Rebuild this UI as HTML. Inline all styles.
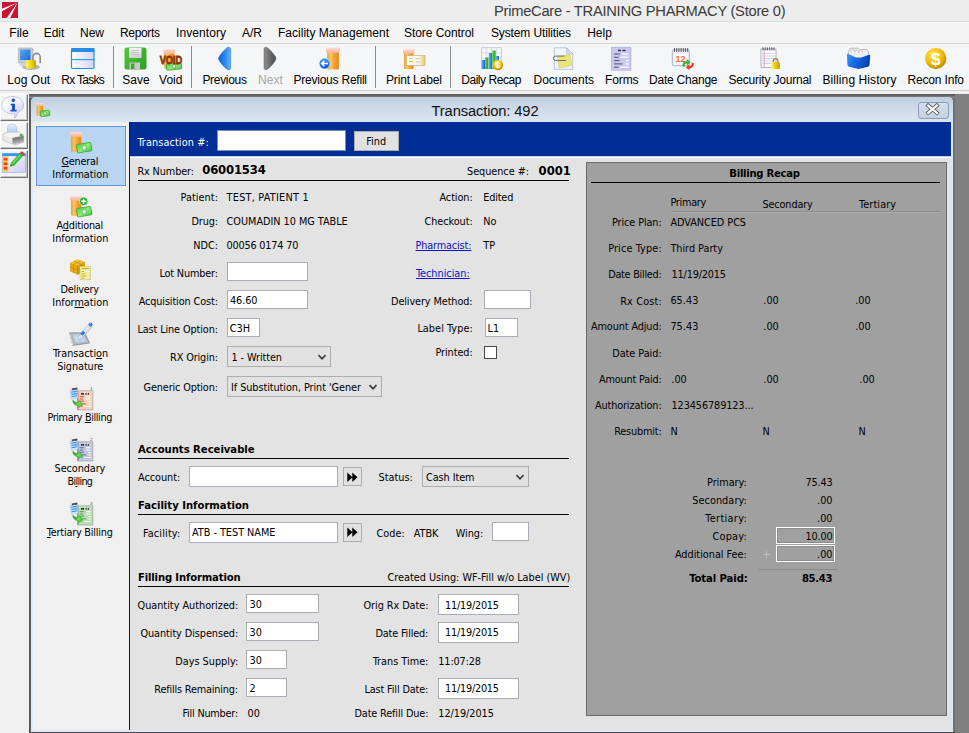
<!DOCTYPE html>
<html lang="en"><head><meta charset="utf-8"><title>PrimeCare - TRAINING PHARMACY (Store 0)</title>
<style>
html,body{margin:0;padding:0}
body{width:969px;height:733px;overflow:hidden;background:#f0f0f0;position:relative;font-family:"Liberation Sans",sans-serif;color:#000}
div,span,svg.ic{position:absolute;box-sizing:border-box}
.t{white-space:nowrap;line-height:14px;font-size:10.8px;font-family:"DejaVu Sans Condensed","Liberation Sans",sans-serif}
.b{font-size:11.2px}
.menu{font-family:"Liberation Sans",sans-serif;font-size:12px;line-height:16px;color:#000}
.title{font-family:"Liberation Sans",sans-serif;font-size:14.7px;line-height:18px;color:#3a3a3a}
.tb{font-family:"Liberation Sans",sans-serif;font-size:12px;line-height:16px;color:#000}
.dis{color:#a6a6a6}
.b{font-weight:bold}
.big{font-family:"DejaVu Sans","Liberation Sans",sans-serif;font-size:11.6px;font-weight:bold;line-height:16px}
.w{color:#fff}
.lnk{color:#0a14c8;text-decoration:underline}
.wt{font-family:"Liberation Sans",sans-serif;font-size:14.7px;line-height:18px;color:#111}
.inp{background:#fff;border:1px solid #a9adb6}
.sel{background:#e2e2e2;border:1px solid #adadad}
.btn{background:#e1e1e1;border:1px solid #adadad}
.hr{background:#000;height:1px}
.sep{background:#8c8c8c;width:1px}
.sbtn{background:#f4f4f4;border-right:1px solid #787878;border-bottom:1px solid #707070;border-top:1px solid #fff;border-left:1px solid #fff;box-shadow:inset -1px -1px 0 #c4c4c4}
u{text-decoration:underline}
</style></head>
<body>
<div class="" style="left:0.0px;top:0.0px;width:969.0px;height:21.0px;background:#ededed"></div>
<div class="" style="left:0.0px;top:21.0px;width:969.0px;height:1.0px;background:#dcdcdc"></div>
<div class="" style="left:0.0px;top:22.0px;width:969.0px;height:21.0px;background:#f4f4f4"></div>
<div class="" style="left:0.0px;top:43.0px;width:969.0px;height:1.0px;background:#d4d4d4"></div>
<div class="" style="left:0.0px;top:44.0px;width:969.0px;height:46.0px;background:#f5f6f7"></div>
<div class="" style="left:0.0px;top:90.0px;width:969.0px;height:1.0px;background:#cdcdcd"></div>
<div class="" style="left:0.0px;top:91.0px;width:969.0px;height:3.0px;background:#f0f0f0"></div>
<svg class="ic" style="left:2px;top:2px" width="17" height="17" viewBox="2 2 17 17"><rect x="2" y="2" width="16" height="16" fill="#cb1431"/><path d="M17.600 2.600L2 8.800V11.200z" fill="#fff"/><path d="M17.600 2.600L6.700 18H10.200z" fill="#fff"/></svg>
<span id="t1" class="t title" style="top:2.2px;letter-spacing:-0.26px;left:494.0px;">PrimeCare - TRAINING PHARMACY (Store 0)</span>
<span id="t2" class="t menu" style="top:24.6px;left:9.3px;">File</span>
<span id="t3" class="t menu" style="top:24.6px;left:43.7px;">Edit</span>
<span id="t4" class="t menu" style="top:24.6px;left:80.0px;">New</span>
<span id="t5" class="t menu" style="top:24.6px;letter-spacing:-0.34px;left:120.0px;">Reports</span>
<span id="t6" class="t menu" style="top:24.6px;letter-spacing:0.08px;left:176.0px;">Inventory</span>
<span id="t7" class="t menu" style="top:24.6px;left:242.0px;">A/R</span>
<span id="t8" class="t menu" style="top:24.6px;letter-spacing:0.02px;left:278.0px;">Facility Management</span>
<span id="t9" class="t menu" style="top:24.6px;letter-spacing:-0.06px;left:404.0px;">Store Control</span>
<span id="t10" class="t menu" style="top:24.6px;letter-spacing:-0.13px;left:491.0px;">System Utilities</span>
<span id="t11" class="t menu" style="top:24.6px;left:587.2px;">Help</span>
<svg class="ic" style="left:17px;top:46px" width="26" height="26" viewBox="17 46 26 26"><defs><linearGradient id="g1" x1="0" y1="0" x2="1" y2="1"><stop offset="0" stop-color="#5aa8f0"/><stop offset="1" stop-color="#1a6ad8"/></linearGradient><linearGradient id="g2" x1="0" y1="0" x2="1" y2="0"><stop offset="0" stop-color="#fff27a"/><stop offset="0.5" stop-color="#f6d800"/><stop offset="1" stop-color="#c8a000"/></linearGradient></defs><ellipse cx="31" cy="67" rx="9" ry="3" fill="#b8b8b8"/><rect x="18.5" y="48" width="14.5" height="15" rx="1" fill="#c9ced6" stroke="#9aa0a8" stroke-width="0.6"/><rect x="20" y="49.5" width="10.5" height="10.5" fill="url(#g1)"/><path d="M21 63h8l1.5 3h-11z" fill="#d4d4d4"/><path d="M33 60v-3a3.6 3.6 0 0 1 7.2 0v6" fill="none" stroke="#8a8a8a" stroke-width="1.6"/><rect x="26" y="60" width="10" height="8.6" rx="1.6" fill="url(#g2)"/></svg>
<svg class="ic" style="left:69px;top:46px" width="28" height="25" viewBox="69 46 28 25"><defs><linearGradient id="g3" x1="0" y1="0" x2="1" y2="0"><stop offset="0" stop-color="#ffffff"/><stop offset="1" stop-color="#d4d4fa"/></linearGradient></defs><rect x="71.5" y="48.5" width="22.5" height="20" rx="1.5" fill="url(#g3)" stroke="#2b8ce6" stroke-width="1.2"/><rect x="71" y="48" width="23.5" height="4" rx="1" fill="#2b8ce6"/><rect x="71" y="59" width="23.5" height="1.2" fill="#39a0ee"/></svg>
<svg class="ic" style="left:123px;top:46px" width="26" height="26" viewBox="123 46 26 26"><defs><linearGradient id="g4" x1="0" y1="0" x2="1" y2="1"><stop offset="0" stop-color="#55c83c"/><stop offset="1" stop-color="#2f9e22"/></linearGradient><linearGradient id="g5" x1="0" y1="0" x2="0" y2="1"><stop offset="0" stop-color="#f4f4f4"/><stop offset="1" stop-color="#cfcfcf"/></linearGradient></defs><rect x="124.5" y="47.5" width="22" height="22" rx="2.2" fill="url(#g4)"/><rect x="129" y="48" width="12.5" height="10" fill="url(#g5)"/><path d="M131 50.5h8M131 52.5h8M131 54.5h8" stroke="#b8b8b8" stroke-width="0.7"/><rect x="129.5" y="62.5" width="10.5" height="7" fill="#c8c8c8"/><rect x="131" y="63.5" width="3.4" height="5.5" fill="#3aa82c"/></svg>
<svg class="ic" style="left:157px;top:46px" width="28" height="26" viewBox="157 46 28 26"><defs><linearGradient id="g6" x1="0" y1="0" x2="1" y2="0"><stop offset="0" stop-color="#f2a024"/><stop offset="0.3" stop-color="#f8c46a"/><stop offset="0.55" stop-color="#f6a83a"/><stop offset="1" stop-color="#ea840a"/></linearGradient><linearGradient id="g7" x1="0" y1="0" x2="0" y2="1"><stop offset="0" stop-color="#fde2d6"/><stop offset="0.5" stop-color="#f9c6b2"/><stop offset="1" stop-color="#f6b8a0"/></linearGradient></defs><rect x="164.344" y="52.76" width="9.912" height="16.24" rx="1.200" fill="url(#g6)"/><rect x="163.4" y="49" width="11.8" height="4.7" rx="1" fill="url(#g7)"/><linearGradient id="g8" x1="0" y1="0" x2="1" y2="1"><stop offset="0" stop-color="#58cc48"/><stop offset="0.5" stop-color="#8eee78"/><stop offset="1" stop-color="#4cc440"/></linearGradient><g transform="rotate(-6 174 66.3)"><rect x="166.5" y="63.1" width="15" height="6.4" rx="0.8" fill="url(#g8)" stroke="#36ac34" stroke-width="0.8"/><ellipse cx="174" cy="66.3" rx="1.728" ry="1.92" fill="#e2e6e0" stroke="#3fae3a" stroke-width="0.7"/></g><text x="171" y="63.600" text-anchor="middle" font-family="Liberation Sans, sans-serif" font-weight="bold" font-size="11.400" textLength="22.600" lengthAdjust="spacingAndGlyphs" fill="#a23a0a" stroke="#8e3206" stroke-width="0.800">VOID</text></svg>
<svg class="ic" style="left:216px;top:46px" width="17" height="26" viewBox="216 46 17 26"><defs><linearGradient id="g9" x1="0" y1="0" x2="1" y2="0"><stop offset="0" stop-color="#1264d4"/><stop offset="0.55" stop-color="#2c88f2"/><stop offset="1" stop-color="#62b4ff"/></linearGradient></defs><path d="M227.800 47.400c1.700-0.600 2.800 0.200 2.800 1.900v18.400c0 1.700-1.100 2.500-2.800 1.900-1.800-0.700-6.300-5.400-8.600-9.200-0.800-1.300-0.800-2.500 0-3.800 2.300-3.800 6.800-8.500 8.600-9.200z" fill="url(#g9)" stroke="#1a5cc0" stroke-width="0.500"/></svg>
<svg class="ic" style="left:262px;top:46px" width="17" height="26" viewBox="262 46 17 26"><defs><linearGradient id="g10" x1="0" y1="0" x2="1" y2="0"><stop offset="0" stop-color="#909090"/><stop offset="0.5" stop-color="#6c6c6c"/><stop offset="1" stop-color="#4a4a4a"/></linearGradient></defs><path d="M266.800 47.400c-1.700-0.600-2.800 0.200-2.800 1.900v18.400c0 1.700 1.100 2.500 2.800 1.900 1.800-0.700 6.300-5.400 8.600-9.200 0.800-1.300 0.800-2.500 0-3.800-2.300-3.800-6.800-8.500-8.600-9.200z" fill="url(#g10)" stroke="#585858" stroke-width="0.500"/></svg>
<svg class="ic" style="left:318px;top:46px" width="24" height="26" viewBox="318 46 24 26"><defs><linearGradient id="g11" x1="0" y1="0" x2="1" y2="0"><stop offset="0" stop-color="#f2a024"/><stop offset="0.3" stop-color="#f8c46a"/><stop offset="0.55" stop-color="#f6a83a"/><stop offset="1" stop-color="#ea840a"/></linearGradient><linearGradient id="g12" x1="0" y1="0" x2="0" y2="1"><stop offset="0" stop-color="#fde2d6"/><stop offset="0.5" stop-color="#f9c6b2"/><stop offset="1" stop-color="#f6b8a0"/></linearGradient><linearGradient id="g13" x1="0" y1="0" x2="0" y2="1"><stop offset="0" stop-color="#4aa0ff"/><stop offset="1" stop-color="#0a50d0"/></linearGradient></defs><rect x="327.12" y="51.636" width="11.76" height="17.864" rx="1.200" fill="url(#g11)"/><rect x="326" y="47.5" width="14" height="5.17" rx="1" fill="url(#g12)"/><circle cx="324.6" cy="63.5" r="5.4" fill="url(#g13)" stroke="#e8f0ff" stroke-width="0.6"/><path d="M328 63.5h-6M324.4 60.8l-2.8 2.7 2.8 2.7" fill="none" stroke="#fff" stroke-width="1.5"/></svg>
<svg class="ic" style="left:401px;top:46px" width="27" height="26" viewBox="401 46 27 26"><defs><linearGradient id="g14" x1="0" y1="0" x2="1" y2="0"><stop offset="0" stop-color="#f2a024"/><stop offset="0.3" stop-color="#f8c46a"/><stop offset="0.55" stop-color="#f6a83a"/><stop offset="1" stop-color="#ea840a"/></linearGradient><linearGradient id="g15" x1="0" y1="0" x2="0" y2="1"><stop offset="0" stop-color="#fde2d6"/><stop offset="0.5" stop-color="#f9c6b2"/><stop offset="1" stop-color="#f6b8a0"/></linearGradient><linearGradient id="g16" x1="0" y1="0" x2="1" y2="0"><stop offset="0" stop-color="#fdfdf6"/><stop offset="0.7" stop-color="#f8f2d8"/><stop offset="1" stop-color="#e6c860"/></linearGradient></defs><rect x="403.92" y="52.76" width="9.66" height="16.24" rx="1.200" fill="url(#g14)"/><rect x="403" y="49" width="11.5" height="4.7" rx="1" fill="url(#g15)"/><rect x="406.5" y="55.5" width="18.5" height="10" fill="url(#g16)" stroke="#b8a878" stroke-width="0.6"/><path d="M409 58.5h4M416 58.5h4M416 62h4" stroke="#c8c8c8" stroke-width="0.9"/><path d="M409 61.5h4" stroke="#e8c030" stroke-width="1.1"/></svg>
<svg class="ic" style="left:479px;top:46px" width="27" height="26" viewBox="479 46 27 26"><defs><radialGradient id="g17" cx="0.38" cy="0.32" r="0.75"><stop offset="0" stop-color="#ffe860"/><stop offset="0.55" stop-color="#f2bc08"/><stop offset="1" stop-color="#b88400"/></radialGradient><linearGradient id="g18" x1="0" y1="0" x2="1" y2="0"><stop offset="0" stop-color="#6ab0ff"/><stop offset="1" stop-color="#1a66d8"/></linearGradient><linearGradient id="g19" x1="0" y1="0" x2="1" y2="0"><stop offset="0" stop-color="#6ad84a"/><stop offset="1" stop-color="#1f9a1f"/></linearGradient></defs><rect x="481.3" y="47.8" width="20.4" height="21" fill="#f4f6fa" stroke="#b0b4bc" stroke-width="0.6"/><path d="M481.3 53h20.4M481.3 58h20.4M481.3 63h20.4M486.4 47.8v21M491.5 47.8v21M496.6 47.8v21" stroke="#c0c4cc" stroke-width="0.5"/><rect x="481.6" y="60" width="3.4" height="9" fill="url(#g18)"/><rect x="485" y="57.5" width="3.4" height="11.5" fill="url(#g19)"/><rect x="488.8" y="53" width="3.4" height="16" fill="url(#g18)"/><rect x="492.2" y="50.5" width="3.4" height="18.5" fill="url(#g19)"/><rect x="496" y="56" width="3" height="8" fill="url(#g18)"/><circle cx="497.9" cy="65" r="5.2" fill="url(#g17)"/><text x="497.9" y="68.06" text-anchor="middle" font-family="Liberation Sans, sans-serif" font-weight="bold" font-size="8.5" fill="#fff">$</text></svg>
<svg class="ic" style="left:552px;top:46px" width="24" height="26" viewBox="552 46 24 26"><path d="M554.3 47.8h12.4l6 6v15.6h-18.4z" fill="#eef4fc" stroke="#a8b4c4" stroke-width="0.7"/><path d="M566.7 47.8v6h6z" fill="#d0dcec" stroke="#a8b4c4" stroke-width="0.6"/><path d="M557.5 56.5l12.5-2 1.8 11-12.6 2.6z" fill="#ece478" stroke="#c8c050" stroke-width="0.5"/><path d="M566 60.5h-10.5a2.2 2.2 0 0 1 0-4.4h9" fill="none" stroke="#707070" stroke-width="1"/></svg>
<svg class="ic" style="left:610px;top:46px" width="23" height="26" viewBox="610 46 23 26"><rect x="611.5" y="47.2" width="19.4" height="23" fill="#c9c9f0" stroke="#a4a4d0" stroke-width="0.6"/><path d="M618 50.5h3M622.5 50.5h3" stroke="#303048" stroke-width="1.6"/><path d="M614 54h6M614 57.3h4.5M614 60.6h5.5M614 63.9h8.5M614 67.2h4.5" stroke="#505070" stroke-width="1"/><path d="M622 54h6.5M620.5 57.3h8M626 60.6h2.5M625.5 63.9h3M620.5 67.2h8" stroke="#f4f4ff" stroke-width="1.6"/></svg>
<svg class="ic" style="left:670px;top:46px" width="26" height="26" viewBox="670 46 26 26"><rect x="672.3" y="50" width="17" height="15.6" rx="1" fill="#f6f6fc" stroke="#8890b8" stroke-width="0.7"/><path d="M672.3 53h17" stroke="#c8cce0" stroke-width="0.5"/><path d="M674.5 48v4M676.7 48v4M678.9 48v4M681.1 48v4M683.3 48v4M685.5 48v4M687.7 48v4" stroke="#444" stroke-width="0.9"/><text x="680.4" y="62" text-anchor="middle" font-family="Liberation Sans, sans-serif" font-weight="bold" font-size="9" fill="#f2701a">12</text><path d="M682.5 66.5a4.6 4.6 0 0 1 4.4-5.6l0-1.9 3.8 3.2-3.8 3.2 0-1.9a2.6 2.6 0 0 0-2.2 3.2z" fill="#3cb43a"/><path d="M693.8 63a4.6 4.6 0 0 1-4.4 5.6l0 1.6-3.6-3 3.6-3 0 1.8a2.4 2.4 0 0 0 2.2-3.2z" fill="#e8421a"/></svg>
<svg class="ic" style="left:759px;top:46px" width="23" height="26" viewBox="759 46 23 26"><defs><linearGradient id="g20" x1="0" y1="0" x2="1" y2="0"><stop offset="0" stop-color="#fff27a"/><stop offset="0.5" stop-color="#f0c800"/><stop offset="1" stop-color="#c09400"/></linearGradient></defs><rect x="761" y="49" width="15" height="18.6" fill="#fbfbff" stroke="#8c94b4" stroke-width="0.7"/><path d="M762 53.5h13M762 56h13M762 58.5h13M762 61h13M762 63.500h13" stroke="#9cb4ec" stroke-width="0.5"/><path d="M764.2 50v17.6" stroke="#e07070" stroke-width="0.6"/><path d="M763 47.4v3M765.2 47.4v3M767.4 47.4v3M769.600 47.4v3M771.800 47.4v3M774 47.4v3" stroke="#444" stroke-width="0.9"/><path d="M773.300 62.500v-1.600a2.300 2.300 0 0 1 4.600 0v1.600" fill="none" stroke="#a88a10" stroke-width="1.2"/><rect x="771.4" y="62.3" width="8.400" height="6.8" rx="1" fill="url(#g20)"/></svg>
<svg class="ic" style="left:845px;top:46px" width="27" height="26" viewBox="845 46 27 26"><defs><linearGradient id="g21" x1="0" y1="0" x2="1" y2="0.3"><stop offset="0" stop-color="#4a98f8"/><stop offset="0.35" stop-color="#1c72e8"/><stop offset="1" stop-color="#0844b8"/></linearGradient></defs><path d="M848.400 57.500V52l1.600-3.800h8l1.500 1.300h7l2 2.500v6z" fill="#efefef" stroke="#a6a6a6" stroke-width="0.700"/><path d="M851 52.500v-2.600h3v2.600M855 53v-2.800h3.200v2.800M859.200 53.500v-2.600h3v2.600" fill="#fdfdfd" stroke="#b4b4b4" stroke-width="0.600"/><path d="M846.900 54.600q0.100-1.300 1.200-0.800l7 3.500q3.400 1 6.800 0l7.200-2.500q1.200-0.300 1.100 1l-0.600 8.700q-0.100 1.700-1.600 2.300l-8.400 2q-1.100 0.300-2.200 0l-8.400-2q-1.500-0.600-1.600-2.300z" fill="url(#g21)"/></svg>
<svg class="ic" style="left:924px;top:46px" width="24" height="26" viewBox="924 46 24 26"><defs><radialGradient id="g22" cx="0.38" cy="0.32" r="0.75"><stop offset="0" stop-color="#ffe860"/><stop offset="0.55" stop-color="#f2bc08"/><stop offset="1" stop-color="#b88400"/></radialGradient></defs><circle cx="935.8" cy="58.6" r="10.6" fill="url(#g22)"/><text x="935.8" y="64.72" text-anchor="middle" font-family="Liberation Sans, sans-serif" font-weight="bold" font-size="17" fill="#fff">$</text></svg>
<span id="t12" class="t tb " style="top:72.1px;letter-spacing:0.05px;left:7.2px;">Log Out</span>
<span id="t13" class="t tb " style="top:72.1px;letter-spacing:-0.70px;left:61.3px;">Rx Tasks</span>
<span id="t14" class="t tb " style="top:72.1px;left:122.3px;">Save</span>
<span id="t15" class="t tb " style="top:72.1px;left:159.1px;">Void</span>
<span id="t16" class="t tb " style="top:72.1px;letter-spacing:-0.30px;left:202.4px;">Previous</span>
<span id="t17" class="t tb dis" style="top:72.1px;left:258.1px;">Next</span>
<span id="t18" class="t tb " style="top:72.1px;letter-spacing:-0.22px;left:293.4px;">Previous Refill</span>
<span id="t19" class="t tb " style="top:72.1px;letter-spacing:-0.15px;left:386.0px;">Print Label</span>
<span id="t20" class="t tb " style="top:72.1px;letter-spacing:-0.44px;left:461.2px;">Daily Recap</span>
<span id="t21" class="t tb " style="top:72.1px;letter-spacing:-0.03px;left:533.5px;">Documents</span>
<span id="t22" class="t tb " style="top:72.1px;letter-spacing:-0.12px;left:605.0px;">Forms</span>
<span id="t23" class="t tb " style="top:72.1px;letter-spacing:-0.22px;left:649.0px;">Date Change</span>
<span id="t24" class="t tb " style="top:72.1px;letter-spacing:-0.20px;left:728.5px;">Security Journal</span>
<span id="t25" class="t tb " style="top:72.1px;letter-spacing:0.09px;left:822.5px;">Billing History</span>
<span id="t26" class="t tb " style="top:72.1px;letter-spacing:-0.17px;left:907.5px;">Recon Info</span>
<div class="sep" style="left:112.5px;top:46.0px;width:1.0px;height:42.0px;"></div>
<div class="sep" style="left:191.0px;top:46.0px;width:1.0px;height:42.0px;"></div>
<div class="sep" style="left:374.8px;top:46.0px;width:1.0px;height:42.0px;"></div>
<div class="sep" style="left:449.9px;top:46.0px;width:1.0px;height:42.0px;"></div>
<div class="sbtn" style="left:0.0px;top:94.0px;width:28.0px;height:27.0px;"></div>
<svg class="ic" style="left:0px;top:94px" width="27" height="26" viewBox="0 94 27 26"><defs><linearGradient id="g23" x1="0" y1="0" x2="1" y2="1"><stop offset="0" stop-color="#ffffff"/><stop offset="0.45" stop-color="#f2f2fe"/><stop offset="1" stop-color="#c0c4f0"/></linearGradient></defs><path d="M12.500 96.500c6.500 0 11 3.800 11 8.600 0 3.600-2.600 6.400-6.200 7.800 0.200 2.200-0.800 4.200-2.800 5.400 0.600-1.600 0.400-3.200-0.400-4.600-0.500 0-1 0.100-1.600 0.100-6.200 0-10.800-3.800-10.800-8.600s4.600-8.700 10.800-8.700z" fill="url(#g23)" stroke="#b4b8d4" stroke-width="0.7"/><circle cx="13.300" cy="100.300" r="1.700" fill="#1a50c8"/><path d="M10.800 103.800h4.200v6h1.600v1.600h-6.200v-1.600h1.600v-4.400h-1.200z" fill="#1a50c8"/></svg>
<div class="sbtn" style="left:0.0px;top:122.0px;width:28.0px;height:27.0px;"></div>
<svg class="ic" style="left:0px;top:123px" width="27" height="25" viewBox="0 123 27 25"><defs><linearGradient id="g24" x1="0" y1="0" x2="0" y2="1"><stop offset="0" stop-color="#e6f0fe"/><stop offset="1" stop-color="#a8ccf6"/></linearGradient><linearGradient id="g25" x1="0" y1="0" x2="0.25" y2="1"><stop offset="0" stop-color="#c6c6c6"/><stop offset="0.35" stop-color="#7a7a7a"/><stop offset="0.7" stop-color="#9c9c9c"/><stop offset="1" stop-color="#d8d8d8"/></linearGradient></defs><path d="M7.400 132.600l0.300-5.400q0.300-3 3.200-3h3.300l2.700 3.600v5.600z" fill="url(#g24)" stroke="#9cb4d4" stroke-width="0.500"/><path d="M3 134.200l5-2 11.500-0.200 4.200 3.200v7l-8.800 2.800-11.900-4.600z" fill="#f3f3f3" stroke="#b4b4b4" stroke-width="0.600"/><path d="M12.400 137.800l11.300-2.400v6.800l-8.800 2.800-2.500-1z" fill="url(#g25)"/><path d="M3.400 136.400l9 2.600M3.400 138.600l9 3" stroke="#d4d4d4" stroke-width="0.600"/><rect x="19.700" y="134" width="2.800" height="2" fill="#3cc030"/></svg>
<div class="sbtn" style="left:0.0px;top:150.0px;width:28.0px;height:28.0px;"></div>
<svg class="ic" style="left:0px;top:150px" width="27" height="26" viewBox="0 150 27 26"><defs><linearGradient id="g26" x1="0" y1="0" x2="1" y2="1"><stop offset="0" stop-color="#ffffff"/><stop offset="1" stop-color="#ccccf8"/></linearGradient></defs><rect x="2.300" y="153.300" width="23.200" height="19" fill="url(#g26)" stroke="#86b6f0" stroke-width="0.700"/><rect x="2.300" y="153.300" width="23.200" height="2.800" fill="#3a94ec"/><rect x="2.700" y="156.100" width="5.600" height="15.800" fill="#f8c860"/><path d="M3.700 158h3.600v2.600h-3.600zM3.700 162.400h3.600v2.600h-3.600zM3.700 166.800h3.600v2.600h-3.600z" fill="#f0401a"/><path d="M10.300 166.300l1-3.600 8.600-9.600 3 2.700-8.600 9.600z" fill="#3cc43a" stroke="#2a9a2a" stroke-width="0.400"/><path d="M12.500 163.600l7.800-8.700" stroke="#8cf07c" stroke-width="0.900"/><path d="M10.300 166.300l0.500-1.700 1.300 1.100z" fill="#555"/><path d="M19.900 153.100l1.300-1.400c0.900-1 3.800 1.600 2.900 2.600l-1.200 1.500z" fill="#e03a2a"/></svg>
<div class="" style="left:29.0px;top:94.0px;width:940.0px;height:639.0px;background:#808080"></div>
<div class="" style="left:29.0px;top:94.0px;width:926.0px;height:639.0px;background:linear-gradient(90deg,#505050,#707070 3px,#707070)"></div>
<div class="" style="left:29.0px;top:94.0px;width:926.0px;height:4.0px;background:linear-gradient(#505050,#6c6c6c 50%,#8e9196)"></div>
<div class="" style="left:29.0px;top:732.0px;width:926.0px;height:1.0px;background:#4a4a4a"></div>
<div class="" style="left:31.0px;top:97.0px;width:922.0px;height:635.0px;background:#dfe9f5;border-radius:5px 5px 0 0"></div>
<div class="" style="left:31.0px;top:97.0px;width:922.0px;height:26.0px;background:linear-gradient(#bfcfe0,#dde7f3);border-radius:5px 5px 0 0"></div>
<svg class="ic" style="left:36px;top:103.4px" width="15" height="15" viewBox="36 103.4 15 15"><defs><linearGradient id="g27" x1="0" y1="0" x2="1" y2="0"><stop offset="0" stop-color="#f2a024"/><stop offset="0.3" stop-color="#f8c46a"/><stop offset="0.55" stop-color="#f6a83a"/><stop offset="1" stop-color="#ea840a"/></linearGradient><linearGradient id="g28" x1="0" y1="0" x2="0" y2="1"><stop offset="0" stop-color="#fde2d6"/><stop offset="0.5" stop-color="#f9c6b2"/><stop offset="1" stop-color="#f6b8a0"/></linearGradient></defs><rect x="36.6216" y="105.848" width="6.5268" height="10.5722" rx="1.200" fill="url(#g27)"/><rect x="36" y="103.4" width="7.77" height="3.0597" rx="1" fill="url(#g28)"/><linearGradient id="g29" x1="0" y1="0" x2="1" y2="1"><stop offset="0" stop-color="#58cc48"/><stop offset="0.5" stop-color="#8eee78"/><stop offset="1" stop-color="#4cc440"/></linearGradient><g transform="rotate(-9 45.03 113.76)"><rect x="40.41" y="110.96" width="9.24" height="5.6" rx="0.8" fill="url(#g29)" stroke="#36ac34" stroke-width="0.8"/><ellipse cx="45.03" cy="113.76" rx="1.512" ry="1.68" fill="#e2e6e0" stroke="#3fae3a" stroke-width="0.7"/></g></svg>
<span id="t27" class="t wt" style="top:101.8px;letter-spacing:-0.12px;left:431.5px;">Transaction: 492</span>
<div class="" style="left:917.5px;top:101.5px;width:31.0px;height:17.0px;border:1px solid #8c9cb4;border-radius:3px;background:linear-gradient(#d4dfec,#c3d1e2)"></div>
<svg class="ic" style="left:925px;top:103px" width="16" height="13" viewBox="925 103 16 13"><path d="M928.200 105.600l8.600 7.200M936.800 105.600l-8.600 7.200" stroke="#585858" stroke-width="4" stroke-linecap="square"/><path d="M928.200 105.600l8.600 7.200M936.800 105.600l-8.600 7.200" stroke="#fcfcfc" stroke-width="2.300" stroke-linecap="square"/></svg>
<div class="" style="left:33.0px;top:122.0px;width:96.0px;height:608.0px;background:#f0f0f0"></div>
<div class="" style="left:129.0px;top:122.0px;width:1.0px;height:608.0px;background:#1a1a1a"></div>
<div class="" style="left:36.0px;top:126.0px;width:90.0px;height:59.5px;background:#bad5f2;border:1px solid #5a9be0"></div>
<svg class="ic" style="left:69.8px;top:132.2px" width="23" height="22.2" viewBox="69.8 132.2 23 22.2"><defs><linearGradient id="g30" x1="0" y1="0" x2="1" y2="0"><stop offset="0" stop-color="#f2a024"/><stop offset="0.3" stop-color="#f8c46a"/><stop offset="0.55" stop-color="#f6a83a"/><stop offset="1" stop-color="#ea840a"/></linearGradient><linearGradient id="g31" x1="0" y1="0" x2="0" y2="1"><stop offset="0" stop-color="#fde2d6"/><stop offset="0.5" stop-color="#f9c6b2"/><stop offset="1" stop-color="#f6b8a0"/></linearGradient></defs><rect x="70.7768" y="135.907" width="10.2564" height="16.0094" rx="1.200" fill="url(#g30)"/><rect x="69.8" y="132.2" width="12.21" height="4.63326" rx="1" fill="url(#g31)"/><linearGradient id="g32" x1="0" y1="0" x2="1" y2="1"><stop offset="0" stop-color="#58cc48"/><stop offset="0.5" stop-color="#8eee78"/><stop offset="1" stop-color="#4cc440"/></linearGradient><g transform="rotate(-9 83.99 147.888)"><rect x="76.73" y="143.648" width="14.52" height="8.48" rx="0.8" fill="url(#g32)" stroke="#36ac34" stroke-width="0.8"/><ellipse cx="83.99" cy="147.888" rx="2.2896" ry="2.544" fill="#e2e6e0" stroke="#3fae3a" stroke-width="0.7"/></g></svg>
<span id="t28" class="t sb" style="top:155.2px;letter-spacing:-0.22px;left:61.5px;"><u>G</u>eneral</span>
<span id="t29" class="t sb" style="top:168.1px;letter-spacing:-0.02px;left:52.3px;">Information</span>
<svg class="ic" style="left:69.8px;top:196.2px" width="23" height="22.2" viewBox="69.8 196.2 23 22.2"><defs><linearGradient id="g33" x1="0" y1="0" x2="1" y2="0"><stop offset="0" stop-color="#f2a024"/><stop offset="0.3" stop-color="#f8c46a"/><stop offset="0.55" stop-color="#f6a83a"/><stop offset="1" stop-color="#ea840a"/></linearGradient><linearGradient id="g34" x1="0" y1="0" x2="0" y2="1"><stop offset="0" stop-color="#fde2d6"/><stop offset="0.5" stop-color="#f9c6b2"/><stop offset="1" stop-color="#f6b8a0"/></linearGradient></defs><rect x="70.7768" y="199.907" width="10.2564" height="16.0094" rx="1.200" fill="url(#g33)"/><rect x="69.8" y="196.2" width="12.21" height="4.63326" rx="1" fill="url(#g34)"/><linearGradient id="g35" x1="0" y1="0" x2="1" y2="1"><stop offset="0" stop-color="#58cc48"/><stop offset="0.5" stop-color="#8eee78"/><stop offset="1" stop-color="#4cc440"/></linearGradient><g transform="rotate(-9 83.99 211.888)"><rect x="76.73" y="207.648" width="14.52" height="8.48" rx="0.8" fill="url(#g35)" stroke="#36ac34" stroke-width="0.8"/><ellipse cx="83.99" cy="211.888" rx="2.2896" ry="2.544" fill="#e2e6e0" stroke="#3fae3a" stroke-width="0.7"/></g><circle cx="83.44" cy="201.5" r="4.24" fill="#2eb035" stroke="#fff" stroke-width="0.6"/><path d="M80.896 201.5h5.088M83.44 198.956v5.088" stroke="#fff" stroke-width="1.400"/></svg>
<span id="t30" class="t sb" style="top:219.3px;letter-spacing:-0.23px;left:56.6px;">A<u>d</u>ditional</span>
<span id="t31" class="t sb" style="top:232.2px;letter-spacing:-0.02px;left:52.3px;">Information</span>
<svg class="ic" style="left:69px;top:258.5px" width="23" height="23" viewBox="69 258.5 23 23"><defs><linearGradient id="g36" x1="0" y1="0" x2="1" y2="1"><stop offset="0" stop-color="#f8f8b8"/><stop offset="1" stop-color="#e2de84"/></linearGradient></defs><g transform="translate(0 0)"><path d="M70 262.400l7-3.400 8 2.600v8.800l-7.400 3.800-7.600-3.400z" fill="#e4aa18"/><path d="M70 262.400l7-3.400 8 2.600-7.400 3.400z" fill="#f2c232"/><path d="M77.600 265v9.200l7.400-3.800v-8.800z" fill="#d89c10"/><path d="M73.500 260.700l7.800 2.800v9M70 266.600l7.600 3.400 7.400-3.600M77.600 265v9.200M81.200 260.300l-7.500 3.200v9" stroke="#a87c08" stroke-width="0.600" fill="none" opacity="0.800"/><rect x="80" y="266.200" width="10.500" height="13.200" fill="url(#g36)" stroke="#c4c070" stroke-width="0.500"/><path d="M81.500 268h7.500" stroke="#b8a830" stroke-width="1"/><path d="M81.500 271h2.500M81.500 273.300h3.500M81.500 275.500h4.800M81.500 277.600h2.800" stroke="#c8b428" stroke-width="0.900"/><path d="M85.500 271h3.500M86.500 273.300h2.500M87.300 275.500h1.700M85.500 277.600h3.500" stroke="#fafae0" stroke-width="1"/></g></svg>
<span id="t32" class="t sb" style="top:282.5px;letter-spacing:-0.26px;left:60.5px;">Delivery</span>
<span id="t33" class="t sb" style="top:296.1px;letter-spacing:-0.02px;left:52.3px;">Infor<u>m</u>ation</span>
<svg class="ic" style="left:68.5px;top:321.5px" width="25" height="25" viewBox="68.5 321.5 25 25"><defs><linearGradient id="g37" x1="0" y1="0" x2="1" y2="1"><stop offset="0" stop-color="#fbfbfb"/><stop offset="0.5" stop-color="#e4e6ea"/><stop offset="1" stop-color="#9a9ca2"/></linearGradient></defs><g><path d="M69 332.300h15.200l4.900 10.300-16.700 2.300z" fill="#b4b6ba" stroke="#85878c" stroke-width="0.700"/><path d="M69.200 333.200l3.300 11.600" stroke="#e8e8e8" stroke-width="0.800"/><path d="M72.300 334h10.300l3.500 7-11 1.600z" fill="#b6d4f8"/><path d="M74 336l8 0.500 1.500 3-8 1z" fill="#d4e6fc" opacity="0.700"/><path d="M77.300 338.800l0.600-2.600 10.400-12.600 3.200 2.600-10.400 12.600z" fill="url(#g37)" stroke="#8c8e94" stroke-width="0.400"/><path d="M79.800 333.400l2.600-3.100 2.300 1.900-2.600 3.100z" fill="#2a78e4"/><circle cx="90" cy="323.900" r="2" fill="#2a7ce8"/><circle cx="89.500" cy="323.300" r="0.900" fill="#7ab4f8"/></g></svg>
<span id="t34" class="t sb" style="top:347.3px;letter-spacing:-0.01px;left:52.9px;">Transacti<u>o</u>n</span>
<span id="t35" class="t sb" style="top:360.2px;letter-spacing:-0.09px;left:57.2px;">Signature</span>
<svg class="ic" style="left:68.5px;top:385.5px" width="25" height="25" viewBox="68.5 385.5 25 25"><defs><linearGradient id="g38" x1="0" y1="0" x2="1" y2="0"><stop offset="0" stop-color="#2a9a22"/><stop offset="0.6" stop-color="#6ee050"/><stop offset="1" stop-color="#3cb830"/></linearGradient></defs><g transform="translate(0 0)"><rect x="77.200" y="390.300" width="15.200" height="19.200" fill="#f2d2bc" stroke="#9a9a9a" stroke-width="0.600"/><path d="M77.500 390.300v19.200" stroke="#cc4428" stroke-width="0.900" opacity="0.700"/><path d="M80.500 393.300h3M85 393.300h1.200M87.300 393.300h1.200" stroke="#3a3a3a" stroke-width="1.800"/><path d="M79.200 396.200h4.200M79.200 398.500h3.400M79.200 400.700h4.400M82 403.400h3.600M80 405.600h2.400" stroke="#cc4428" stroke-width="0.900"/><path d="M85.300 396.200h4.600M85.300 398.500h4.600M88 401h2M88 403.400h2M84 406h6" stroke="#fafafa" stroke-width="1.200"/><path d="M69.600 389.800l6.800-1 1.300 8.600-6.800 1.400z" fill="#dcecff" stroke="#78aef0" stroke-width="0.500"/><path d="M71.200 387.900l5.600-0.900 0.300 1.900-5.600 0.900z" fill="#4c4c4c"/><path d="M70.600 391.800l5.600-0.900M70.900 394l5.600-0.900M71.200 396.200l5.600-0.900" stroke="#2a80ec" stroke-width="1.100"/><path d="M72.200 399.800c2 1.600 4 2.300 6 2.200v-2.300l4 3.900-4 3.900v-2.300c-3.400 0.200-5.600-2-6-5.400z" fill="url(#g38)" stroke="#1f8a1f" stroke-width="0.400"/><text x="89.800" y="389.400" font-family="Liberation Sans, sans-serif" font-size="4" fill="#444">1</text></g></svg>
<span id="t36" class="t sb" style="top:410.5px;letter-spacing:-0.39px;left:47.4px;">Primary <u>B</u>illing</span>
<svg class="ic" style="left:68.5px;top:436.5px" width="25" height="25" viewBox="68.5 436.5 25 25"><defs><linearGradient id="g39" x1="0" y1="0" x2="1" y2="0"><stop offset="0" stop-color="#2a9a22"/><stop offset="0.6" stop-color="#6ee050"/><stop offset="1" stop-color="#3cb830"/></linearGradient></defs><g transform="translate(0 51)"><rect x="77.200" y="390.300" width="15.200" height="19.200" fill="#c2c8e0" stroke="#9a9a9a" stroke-width="0.600"/><path d="M77.500 390.300v19.200" stroke="#58689c" stroke-width="0.900" opacity="0.700"/><path d="M80.500 393.300h3M85 393.300h1.200M87.300 393.300h1.200" stroke="#3a3a3a" stroke-width="1.800"/><path d="M79.200 396.200h4.200M79.200 398.500h3.400M79.200 400.700h4.400M82 403.400h3.600M80 405.600h2.400" stroke="#58689c" stroke-width="0.900"/><path d="M85.300 396.200h4.600M85.300 398.500h4.600M88 401h2M88 403.400h2M84 406h6" stroke="#fafafa" stroke-width="1.200"/><path d="M69.600 389.800l6.800-1 1.300 8.600-6.800 1.400z" fill="#dcecff" stroke="#78aef0" stroke-width="0.500"/><path d="M71.200 387.900l5.600-0.900 0.300 1.900-5.600 0.900z" fill="#4c4c4c"/><path d="M70.600 391.800l5.600-0.900M70.900 394l5.600-0.900M71.200 396.200l5.600-0.900" stroke="#2a80ec" stroke-width="1.100"/><path d="M72.200 399.800c2 1.600 4 2.300 6 2.200v-2.300l4 3.900-4 3.900v-2.300c-3.400 0.200-5.600-2-6-5.400z" fill="url(#g39)" stroke="#1f8a1f" stroke-width="0.400"/><text x="89.800" y="389.400" font-family="Liberation Sans, sans-serif" font-size="4" fill="#444">2</text></g></svg>
<span id="t37" class="t sb" style="top:461.8px;letter-spacing:-0.09px;left:54.6px;">Secondary</span>
<span id="t38" class="t sb" style="top:475.2px;letter-spacing:-0.72px;left:67.5px;">Bi<u>l</u>ling</span>
<svg class="ic" style="left:68.5px;top:500.5px" width="25" height="25" viewBox="68.5 500.5 25 25"><defs><linearGradient id="g40" x1="0" y1="0" x2="1" y2="0"><stop offset="0" stop-color="#2a9a22"/><stop offset="0.6" stop-color="#6ee050"/><stop offset="1" stop-color="#3cb830"/></linearGradient></defs><g transform="translate(0 115)"><rect x="77.200" y="390.300" width="15.200" height="19.200" fill="#bcdcb4" stroke="#9a9a9a" stroke-width="0.600"/><path d="M77.500 390.300v19.200" stroke="#4c9c4c" stroke-width="0.900" opacity="0.700"/><path d="M80.500 393.300h3M85 393.300h1.200M87.300 393.300h1.200" stroke="#3a3a3a" stroke-width="1.800"/><path d="M79.200 396.200h4.200M79.200 398.500h3.400M79.200 400.700h4.400M82 403.400h3.600M80 405.600h2.400" stroke="#4c9c4c" stroke-width="0.900"/><path d="M85.300 396.200h4.600M85.300 398.500h4.600M88 401h2M88 403.400h2M84 406h6" stroke="#fafafa" stroke-width="1.200"/><path d="M69.600 389.800l6.800-1 1.300 8.600-6.800 1.400z" fill="#dcecff" stroke="#78aef0" stroke-width="0.500"/><path d="M71.200 387.900l5.600-0.900 0.300 1.900-5.600 0.900z" fill="#4c4c4c"/><path d="M70.600 391.800l5.600-0.900M70.900 394l5.600-0.900M71.200 396.200l5.600-0.900" stroke="#2a80ec" stroke-width="1.100"/><path d="M72.200 399.800c2 1.600 4 2.300 6 2.200v-2.300l4 3.900-4 3.900v-2.300c-3.400 0.200-5.600-2-6-5.400z" fill="url(#g40)" stroke="#1f8a1f" stroke-width="0.400"/><text x="89.800" y="389.400" font-family="Liberation Sans, sans-serif" font-size="4" fill="#444">3</text></g></svg>
<span id="t39" class="t sb" style="top:525.5px;letter-spacing:-0.20px;left:46.8px;"><u>T</u>ertiary Billing</span>
<div class="" style="left:130.0px;top:122.0px;width:821.0px;height:34.0px;background:#002e96"></div>
<span id="t40" class="t w" style="top:135.9px;letter-spacing:0.11px;left:137.4px;">Transaction #:</span>
<div class="inp" style="left:217.0px;top:130.0px;width:129.0px;height:21.0px;border-color:#7a8cb8"></div>
<div class="btn" style="left:354.0px;top:131.0px;width:45.0px;height:20.0px;"></div>
<span id="t41" class="t " style="top:134.5px;left:366.3px;">Find</span>
<div class="" style="left:130.0px;top:156.0px;width:822.0px;height:574.0px;background:#e3e3e3"></div>
<div class="" style="left:130.0px;top:156.0px;width:821.0px;height:2.0px;background:linear-gradient(#c4cce2 50%,#fcfcfc 50%)"></div>
<span id="t42" class="t " style="top:164.9px;letter-spacing:-0.12px;left:137.4px;">Rx Number:</span>
<span id="t43" class="t big" style="top:161.9px;letter-spacing:-0.16px;left:202.3px;">06001534</span>
<span id="t44" class="t " style="top:165.2px;letter-spacing:-0.04px;left:467.0px;">Sequence #:</span>
<span id="t45" class="t big" style="top:162.6px;left:538.6px;">0001</span>
<div class="hr" style="left:137.5px;top:180.0px;width:431.5px;height:1.0px;"></div>
<span id="t46" class="t " style="top:191.2px;letter-spacing:0.06px;left:180.5px;">Patient:</span>
<span id="t47" class="t " style="top:191.2px;letter-spacing:0.24px;left:226.6px;">TEST, PATIENT 1</span>
<span id="t48" class="t " style="top:215.1px;letter-spacing:-0.14px;left:191.5px;">Drug:</span>
<span id="t49" class="t " style="top:215.1px;letter-spacing:-0.03px;left:226.6px;">COUMADIN 10 MG TABLE</span>
<span id="t50" class="t " style="top:239.1px;left:193.2px;">NDC:</span>
<span id="t51" class="t " style="top:239.1px;letter-spacing:-0.20px;left:226.6px;">00056 0174 70</span>
<span id="t52" class="t " style="top:266.9px;letter-spacing:-0.17px;left:159.5px;">Lot Number:</span>
<div class="inp" style="left:227.0px;top:262.0px;width:81.0px;height:19.0px;"></div>
<span id="t53" class="t " style="top:294.9px;letter-spacing:-0.12px;left:138.7px;">Acquisition Cost:</span>
<div class="inp" style="left:227.0px;top:290.0px;width:81.0px;height:19.0px;"></div>
<span id="t54" class="t " style="top:293.9px;letter-spacing:-0.08px;left:230.0px;">46.60</span>
<span id="t55" class="t " style="top:322.9px;letter-spacing:-0.11px;left:137.4px;">Last Line Option:</span>
<div class="inp" style="left:227.0px;top:318.0px;width:33.0px;height:19.0px;"></div>
<span id="t56" class="t " style="top:321.9px;left:229.8px;">C3H</span>
<span id="t57" class="t " style="top:351.2px;letter-spacing:-0.12px;left:170.0px;">RX Origin:</span>
<div class="sel" style="left:227.0px;top:346.0px;width:104.0px;height:21.0px;"></div>
<span id="t58" class="t " style="top:351.2px;letter-spacing:-0.09px;left:231.5px;">1 - Written</span>
<svg class="ic" style="left:316.5px;top:353px" width="10" height="8" viewBox="316.5 353 10 8"><path d="M318 355.2l3.500 3.600 3.500-3.600" fill="none" stroke="#404040" stroke-width="1.800"/></svg>
<span id="t59" class="t " style="top:380.9px;letter-spacing:-0.15px;left:143.6px;">Generic Option:</span>
<div class="sel" style="left:227.0px;top:376.0px;width:155.0px;height:21.0px;"></div>
<span id="t60" class="t " style="top:380.9px;letter-spacing:-0.07px;left:231.0px;">If Substitution, Print 'Gener</span>
<svg class="ic" style="left:367.5px;top:383px" width="10" height="8" viewBox="367.5 383 10 8"><path d="M369 385.2l3.500 3.600 3.500-3.600" fill="none" stroke="#404040" stroke-width="1.800"/></svg>
<span id="t61" class="t " style="top:191.1px;letter-spacing:-0.08px;left:439.5px;">Action:</span>
<span id="t62" class="t " style="top:191.1px;letter-spacing:-0.19px;left:483.3px;">Edited</span>
<span id="t63" class="t " style="top:215.3px;letter-spacing:-0.05px;left:424.4px;">Checkout:</span>
<span id="t64" class="t " style="top:215.3px;left:483.3px;">No</span>
<span id="t65" class="t lnk" style="top:238.7px;letter-spacing:-0.14px;left:415.5px;">Pharmacist:</span>
<span id="t66" class="t " style="top:238.7px;left:483.3px;">TP</span>
<span id="t67" class="t lnk" style="top:266.5px;letter-spacing:-0.02px;left:416.0px;">Technician:</span>
<span id="t68" class="t " style="top:294.5px;letter-spacing:-0.10px;left:391.0px;">Delivery Method:</span>
<div class="inp" style="left:484.0px;top:290.0px;width:47.0px;height:19.0px;"></div>
<span id="t69" class="t " style="top:322.1px;letter-spacing:0.06px;left:417.4px;">Label Type:</span>
<div class="inp" style="left:485.0px;top:318.0px;width:33.0px;height:19.0px;"></div>
<span id="t70" class="t " style="top:322.4px;left:487.5px;">L1</span>
<span id="t71" class="t " style="top:346.1px;letter-spacing:-0.08px;left:435.5px;">Printed:</span>
<div class="" style="left:484.0px;top:346.0px;width:13.0px;height:13.0px;background:#fff;border:1px solid #484848"></div>
<span id="t72" class="t b" style="top:443.1px;letter-spacing:-0.02px;left:138.0px;">Accounts Receivable</span>
<div class="hr" style="left:137.5px;top:458.0px;width:431.5px;height:1.0px;"></div>
<span id="t73" class="t " style="top:470.9px;letter-spacing:-0.03px;left:138.0px;">Account:</span>
<div class="inp" style="left:189.0px;top:466.0px;width:149.0px;height:21.0px;"></div>
<div class="btn" style="left:343.0px;top:467.0px;width:19.0px;height:19.0px;"></div><svg class="ic" style="left:343px;top:467.5px" width="19" height="18.5" viewBox="343 467.5 19 18.5"><path d="M347.3 471.95v9.600l5.200-4.800zM352.3 471.95v9.600l5.200-4.800z" fill="#000"/></svg>
<span id="t74" class="t " style="top:470.9px;letter-spacing:-0.02px;left:378.6px;">Status:</span>
<div class="sel" style="left:422.0px;top:466.0px;width:107.0px;height:21.0px;"></div>
<span id="t75" class="t " style="top:470.9px;letter-spacing:-0.08px;left:426.0px;">Cash Item</span>
<svg class="ic" style="left:515px;top:473px" width="10" height="8" viewBox="515 473 10 8"><path d="M516.5 475.2l3.500 3.600 3.500-3.600" fill="none" stroke="#404040" stroke-width="1.800"/></svg>
<span id="t76" class="t b" style="top:498.9px;letter-spacing:-0.00px;left:138.0px;">Facility Information</span>
<div class="hr" style="left:137.5px;top:514.0px;width:431.5px;height:1.0px;"></div>
<span id="t77" class="t " style="top:526.9px;letter-spacing:0.17px;left:142.9px;">Facility:</span>
<div class="inp" style="left:189.0px;top:522.0px;width:149.0px;height:21.0px;"></div>
<span id="t78" class="t " style="top:526.2px;letter-spacing:-0.02px;left:192.0px;">ATB - TEST NAME</span>
<div class="btn" style="left:343.0px;top:523.0px;width:19.0px;height:19.0px;"></div><svg class="ic" style="left:343px;top:523px" width="19" height="18.5" viewBox="343 523 19 18.5"><path d="M347.3 527.45v9.600l5.200-4.800zM352.3 527.45v9.600l5.200-4.800z" fill="#000"/></svg>
<span id="t79" class="t " style="top:526.7px;letter-spacing:0.09px;left:376.4px;">Code:</span>
<span id="t80" class="t " style="top:526.7px;left:413.7px;">ATBK</span>
<span id="t81" class="t " style="top:526.7px;letter-spacing:-0.04px;left:455.7px;">Wing:</span>
<div class="inp" style="left:492.0px;top:522.0px;width:37.0px;height:19.0px;"></div>
<span id="t82" class="t b" style="top:570.7px;letter-spacing:-0.15px;left:138.0px;">Filling Information</span>
<span id="t83" class="t " style="top:571.2px;letter-spacing:-0.01px;left:387.5px;">Created Using: WF-Fill w/o Label (WV)</span>
<div class="hr" style="left:137.5px;top:586.0px;width:431.5px;height:1.0px;"></div>
<span id="t84" class="t " style="top:598.7px;letter-spacing:-0.01px;left:137.5px;">Quantity Authorized:</span>
<div class="inp" style="left:246.0px;top:594.0px;width:73.0px;height:19.0px;"></div>
<span id="t85" class="t " style="top:598.2px;left:249.5px;">30</span>
<span id="t86" class="t " style="top:626.7px;letter-spacing:-0.07px;left:140.4px;">Quantity Dispensed:</span>
<div class="inp" style="left:246.0px;top:622.0px;width:73.0px;height:19.0px;"></div>
<span id="t87" class="t " style="top:626.2px;left:249.5px;">30</span>
<span id="t88" class="t " style="top:654.9px;letter-spacing:-0.00px;left:175.3px;">Days Supply:</span>
<div class="inp" style="left:246.0px;top:650.0px;width:41.0px;height:19.0px;"></div>
<span id="t89" class="t " style="top:654.4px;left:249.5px;">30</span>
<span id="t90" class="t " style="top:682.9px;letter-spacing:-0.17px;left:154.3px;">Refills Remaining:</span>
<div class="inp" style="left:246.0px;top:678.0px;width:41.0px;height:19.0px;"></div>
<span id="t91" class="t " style="top:682.4px;left:249.5px;">2</span>
<span id="t92" class="t " style="top:706.6px;letter-spacing:-0.22px;left:182.5px;">Fill Number:</span>
<span id="t93" class="t " style="top:706.6px;left:247.6px;">00</span>
<span id="t94" class="t " style="top:599.1px;letter-spacing:-0.06px;left:363.5px;">Orig Rx Date:</span>
<div class="inp" style="left:438.0px;top:594.0px;width:81.0px;height:21.0px;"></div>
<span id="t95" class="t " style="top:598.6px;letter-spacing:-0.22px;left:445.0px;">11/19/2015</span>
<span id="t96" class="t " style="top:626.9px;letter-spacing:-0.15px;left:375.4px;">Date Filled:</span>
<div class="inp" style="left:438.0px;top:622.0px;width:81.0px;height:21.0px;"></div>
<span id="t97" class="t " style="top:626.4px;letter-spacing:-0.22px;left:445.0px;">11/19/2015</span>
<span id="t98" class="t " style="top:654.9px;letter-spacing:0.01px;left:372.7px;">Trans Time:</span>
<span id="t99" class="t " style="top:654.9px;letter-spacing:-0.13px;left:438.3px;">11:07:28</span>
<span id="t100" class="t " style="top:682.9px;letter-spacing:-0.14px;left:364.5px;">Last Fill Date:</span>
<div class="inp" style="left:438.0px;top:678.0px;width:81.0px;height:21.0px;"></div>
<span id="t101" class="t " style="top:682.4px;letter-spacing:-0.22px;left:445.0px;">11/19/2015</span>
<span id="t102" class="t " style="top:706.9px;letter-spacing:-0.14px;left:354.5px;">Date Refill Due:</span>
<span id="t103" class="t " style="top:706.9px;letter-spacing:-0.05px;left:438.3px;">12/19/2015</span>
<div class="" style="left:586.0px;top:162.0px;width:361.0px;height:554.0px;background:#a0a0a0;border:1px solid #6a6a6a"></div>
<span id="t104" class="t b" style="top:166.9px;letter-spacing:-0.26px;left:729.3px;">Billing Recap</span>
<div class="hr" style="left:591.0px;top:182.0px;width:348.5px;height:1.0px;"></div>
<span id="t105" class="t " style="top:195.9px;letter-spacing:-0.27px;left:670.4px;">Primary</span>
<span id="t106" class="t " style="top:197.9px;letter-spacing:-0.14px;left:762.5px;">Secondary</span>
<span id="t107" class="t " style="top:197.9px;letter-spacing:0.12px;left:859.0px;">Tertiary</span>
<div class="" style="left:670.5px;top:211.0px;width:269.0px;height:2.0px;background:linear-gradient(#8c8c8c 50%,#acacac 50%)"></div>
<span id="t108" class="t " style="top:216.3px;letter-spacing:-0.10px;left:612.0px;">Price Plan:</span>
<span id="t109" class="t " style="top:215.9px;letter-spacing:-0.04px;left:670.4px;">ADVANCED PCS</span>
<span id="t110" class="t " style="top:242.3px;letter-spacing:0.13px;left:608.2px;">Price Type:</span>
<span id="t111" class="t " style="top:241.9px;letter-spacing:-0.02px;left:670.4px;">Third Party</span>
<span id="t112" class="t " style="top:267.9px;letter-spacing:-0.27px;left:608.2px;">Date Billed:</span>
<span id="t113" class="t " style="top:267.5px;letter-spacing:-0.16px;left:671.5px;">11/19/2015</span>
<span id="t114" class="t " style="top:294.5px;letter-spacing:0.15px;left:620.2px;">Rx Cost:</span>
<span id="t115" class="t " style="top:294.1px;letter-spacing:0.05px;left:670.4px;">65.43</span>
<span id="t116" class="t " style="top:294.1px;left:763.3px;">.00</span>
<span id="t117" class="t " style="top:294.1px;left:855.2px;">.00</span>
<span id="t118" class="t " style="top:320.3px;letter-spacing:-0.12px;left:591.0px;">Amount Adjud:</span>
<span id="t119" class="t " style="top:319.9px;letter-spacing:0.05px;left:670.4px;">75.43</span>
<span id="t120" class="t " style="top:319.9px;left:763.3px;">.00</span>
<span id="t121" class="t " style="top:319.9px;left:855.2px;">.00</span>
<span id="t122" class="t " style="top:346.9px;letter-spacing:-0.03px;left:612.2px;">Date Paid:</span>
<span id="t123" class="t " style="top:372.9px;letter-spacing:-0.18px;left:599.0px;">Amount Paid:</span>
<span id="t124" class="t " style="top:372.5px;left:671.3px;">.00</span>
<span id="t125" class="t " style="top:372.5px;left:763.3px;">.00</span>
<span id="t126" class="t " style="top:372.5px;left:859.3px;">.00</span>
<span id="t127" class="t " style="top:398.9px;letter-spacing:-0.12px;left:594.9px;">Authorization:</span>
<span id="t128" class="t " style="top:398.5px;letter-spacing:-0.10px;left:671.5px;">123456789123...</span>
<span id="t129" class="t " style="top:425.4px;letter-spacing:-0.17px;left:614.2px;">Resubmit:</span>
<span id="t130" class="t " style="top:425.0px;left:670.4px;">N</span>
<span id="t131" class="t " style="top:425.0px;left:762.5px;">N</span>
<span id="t132" class="t " style="top:425.0px;left:858.5px;">N</span>
<span id="t133" class="t " style="top:476.2px;letter-spacing:-0.03px;left:707.0px;">Primary:</span>
<span id="t134" class="t " style="top:476.2px;letter-spacing:-0.15px;left:805.4px;">75.43</span>
<span id="t135" class="t " style="top:494.1px;letter-spacing:0.07px;left:692.2px;">Secondary:</span>
<span id="t136" class="t " style="top:494.1px;left:817.1px;">.00</span>
<span id="t137" class="t " style="top:512.1px;letter-spacing:0.34px;left:705.3px;">Tertiary:</span>
<span id="t138" class="t " style="top:512.1px;left:817.1px;">.00</span>
<div class="" style="left:775.5px;top:527.0px;width:59.5px;height:17.0px;border:1px solid #fff;background:#a0a0a0;box-shadow:inset 0 0 0 1px #8c8c8c"></div>
<div class="" style="left:775.5px;top:545.0px;width:59.5px;height:17.0px;border:1px solid #fff;background:#a0a0a0;box-shadow:inset 0 0 0 1px #8c8c8c"></div>
<span id="t139" class="t " style="top:529.9px;letter-spacing:0.24px;left:712.5px;">Copay:</span>
<span id="t140" class="t " style="top:529.9px;letter-spacing:-0.15px;left:805.4px;">10.00</span>
<span id="t141" class="t " style="top:547.9px;letter-spacing:-0.01px;left:674.9px;">Additional Fee:</span>
<span id="t142" class="t " style="top:547.9px;left:817.1px;">.00</span>
<span id="t143" class="t " style="top:547.9px;left:762.5px;color:#c4c4c4">+</span>
<div class="" style="left:759.0px;top:568.5px;width:78.0px;height:1.0px;background:#888"></div>
<span id="t144" class="t b" style="top:571.5px;letter-spacing:-0.07px;left:689.2px;">Total Paid:</span>
<span id="t145" class="t b" style="top:571.5px;letter-spacing:-0.29px;left:801.9px;">85.43</span>
</body></html>
